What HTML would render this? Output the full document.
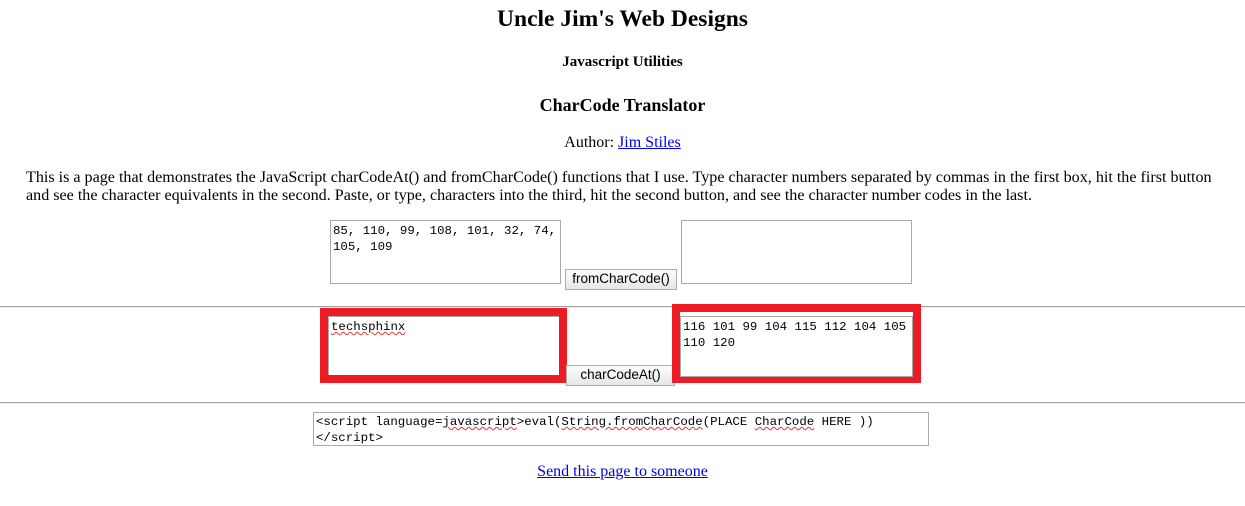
<!DOCTYPE html>
<html><head><style>
body{margin:0;width:1245px;height:506px;background:#fff;font-family:"Liberation Serif",serif;position:relative;overflow:hidden;color:#000}
.c{position:absolute;left:0;width:1245px;text-align:center;font-weight:bold}
.ta{position:absolute;box-sizing:border-box;border:1px solid #a9a9a9;background:#fff;font-family:"Liberation Mono",monospace;font-size:12.4px;line-height:16px;padding:2px 2px;white-space:pre;overflow:hidden}
.btn{position:absolute;box-sizing:border-box;border:1px solid #adadad;background:linear-gradient(#fdfdfd,#e6e6e6);font-family:"Liberation Sans",sans-serif;font-size:13.5px;text-align:center;line-height:18px}
.red{position:absolute;box-sizing:border-box;border:8px solid #ed1c24}
.hr{position:absolute;left:0;width:1245px;height:0;border-top:1px solid #a0a0a0;border-bottom:1px solid #eee}
a{color:#0000ee}
.sq{text-decoration:underline wavy #e33;text-decoration-thickness:1px}
</style></head><body>
<div class="c" style="top:6px;font-size:23.5px">Uncle Jim's Web Designs</div>
<div class="c" style="top:54px;font-size:15px">Javascript Utilities</div>
<div class="c" style="top:95px;font-size:18px">CharCode Translator</div>
<div class="c" style="top:134px;font-size:16px;font-weight:normal">Author: <a href="#">Jim Stiles</a></div>
<div style="position:absolute;left:26px;top:169px;width:1200px;font-size:16.1px;line-height:18px">This is a page that demonstrates the JavaScript charCodeAt() and fromCharCode() functions that I use. Type character numbers separated by commas in the first box, hit the first button and see the character equivalents in the second. Paste, or type, characters into the third, hit the second button, and see the character number codes in the last.</div>
<div class="ta" style="left:330px;top:220px;width:231px;height:64px">85, 110, 99, 108, 101, 32, 74,
105, 109</div>
<div class="btn" style="left:565px;top:269px;width:112px;height:21px">fromCharCode()</div>
<div class="ta" style="left:681px;top:220px;width:231px;height:64px"></div>
<div class="hr" style="top:306px"></div>
<div class="ta" style="left:328px;top:316px;width:232px;height:61px"><span class="sq">techsphinx</span></div>
<div class="red" style="left:320px;top:308px;width:247px;height:75px"></div>
<div class="btn" style="left:566px;top:365px;width:109px;height:21px">charCodeAt()</div>
<div class="red" style="left:672px;top:304px;width:249px;height:79px"></div>
<div class="ta" style="left:680px;top:316px;width:233px;height:61px">116 101 99 104 115 112 104 105
110 120</div>
<div class="hr" style="top:402px"></div>
<div class="ta" style="left:313px;top:412px;width:616px;height:34px;padding-top:1px">&lt;script language=<span class="sq">javascript</span>&gt;eval(<span class="sq">String.fromCharCode</span>(PLACE <span class="sq">CharCode</span> HERE ))
&lt;/script&gt;</div>
<div class="c" style="top:463px;font-size:16px;font-weight:normal"><a href="#">Send this page to someone</a></div>
</body></html>
